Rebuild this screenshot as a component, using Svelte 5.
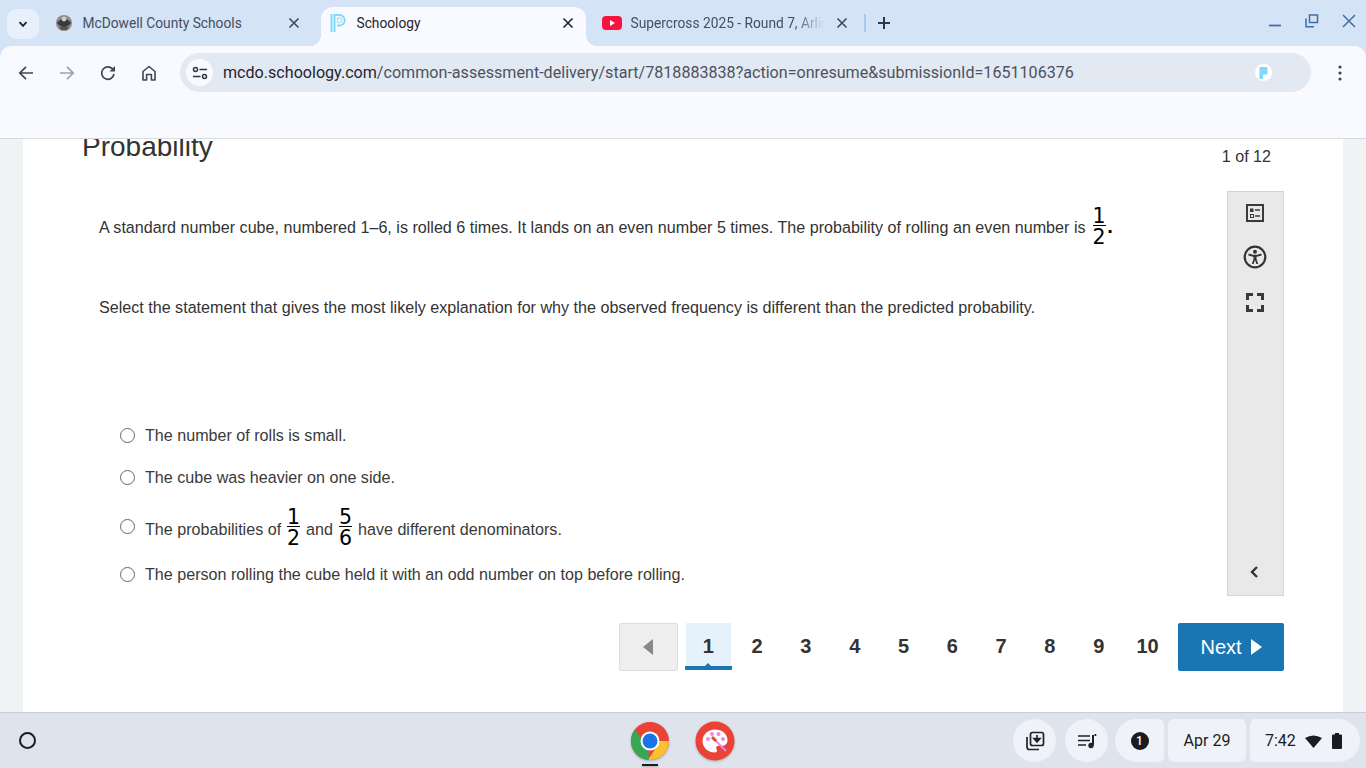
<script>
  const tabs = [
    { id: 'mc', title: 'McDowell County Schools' },
    { id: 'sc', title: 'Schoology', active: true },
    { id: 'yt', title: 'Supercross 2025 - Round 7, Arlington', fade: true }
  ];
  const options = [
    'The number of rolls is small.',
    'The cube was heavier on one side.',
    null,
    'The person rolling the cube held it with an odd number on top before rolling.'
  ];
  const pages = [1, 2, 3, 4, 5, 6, 7, 8, 9, 10];
</script>

{#snippet frac(n, d)}
  <span class="frac"><span class="num">{n}</span><span class="den">{d}</span></span>
{/snippet}

<div class="screen">
  <header class="chrome">
    <div class="tabstrip">
      <button class="tabmenu" aria-label="Search tabs">
        <svg width="12" height="12" viewBox="0 0 12 12"><path d="M2.500 4.200 6 7.800l3.500-3.600" fill="none" stroke="#1f2530" stroke-width="1.900"/></svg>
      </button>
      {#each tabs as tab}
        <div class="tab" class:active={tab.active}>
          <span class="favicon">
            {#if tab.id === 'mc'}
              <svg width="16" height="16" viewBox="0 0 16 16"><circle cx="8" cy="8" r="8" fill="#8b8b8b"/><path d="M1 8q3-4 7-4t7 4q-3 4-7 4T1 8z" fill="#3a3a3a"/><circle cx="8" cy="4" r="2.400" fill="#cfcfcf"/><path d="M3 12h10l-2 3H5z" fill="#565656"/></svg>
            {:else if tab.id === 'sc'}
              <svg width="16" height="18" viewBox="0 0 16 18"><path d="M1.500 0v18M4.500 0v18" stroke="#7fd9fb" stroke-width="2" fill="none"/><path d="M4.500 1h5a5 5 0 0 1 0 10.500H7" stroke="#7fd9fb" stroke-width="1.800" fill="none"/><path d="M7.500 4h2a2.200 2.200 0 0 1 0 4.600H7.500z" stroke="#a8e6fc" stroke-width="1.300" fill="none"/></svg>
            {:else}
              <svg width="20" height="14" viewBox="0 0 20 14"><rect width="20" height="14" rx="4" fill="#f8133c"/><path d="M8 4v6l5-3z" fill="#fff"/></svg>
            {/if}
          </span>
          <span class="tabtitle" class:fade={tab.fade}>{tab.title}</span>
          <svg class="tabx" width="12" height="12" viewBox="0 0 12 12"><path d="M1.500 1.500l9 9m0-9l-9 9" fill="none" stroke={tab.active ? '#20242c' : '#3f4a5c'} stroke-width="1.600"/></svg>
        </div>
      {/each}
      <span class="sep"></span>
      <svg class="plus" width="14" height="14" viewBox="0 0 14 14"><path d="M7 1v12M1 7h12" stroke="#2c3a50" stroke-width="2"/></svg>
      <div class="winctl">
        <svg width="14" height="14" viewBox="0 0 14 14"><path d="M1 11.500h12" stroke="#3f6fa5" stroke-width="1.800"/></svg>
        <svg width="14" height="14" viewBox="0 0 14 14"><path d="M4.500 1h8v7.500h-8zM1 4.500v8.200h8" fill="none" stroke="#3f6fa5" stroke-width="1.500"/></svg>
        <svg width="14" height="14" viewBox="0 0 14 14"><path d="M1 1l12 12m0-12L1 13" fill="none" stroke="#3f6fa5" stroke-width="1.500"/></svg>
      </div>
    </div>
    <div class="toolbar">
      <div class="navicons">
        <svg width="18" height="18" viewBox="0 0 18 18"><path d="M16 9H3m6-6.200L2.800 9 9 15.200" fill="none" stroke="#3c4656" stroke-width="1.700"/></svg>
        <svg width="18" height="18" viewBox="0 0 18 18"><path d="M2 9h13m-6-6.200L15.200 9 9 15.200" fill="none" stroke="#9aa2ae" stroke-width="1.700"/></svg>
        <svg width="18" height="18" viewBox="0 0 18 18"><path d="M15 10a6.200 6.200 0 1 1-1.700-5.300L15 6.500" fill="none" stroke="#3c4656" stroke-width="1.700"/><path d="M16 2v5.500h-5.500z" fill="#3c4656"/></svg>
        <svg width="18" height="18" viewBox="0 0 18 18"><path d="M3 16V7.500L9 2.500l6 5V16h-3.600v-5.500H6.600V16z" fill="none" stroke="#3c4656" stroke-width="1.600" stroke-linejoin="round"/></svg>
      </div>
      <div class="omnibox">
        <span class="siteinfo">
          <svg width="16" height="14" viewBox="0 0 16 14"><circle cx="3.500" cy="3.500" r="2" fill="none" stroke="#2c3542" stroke-width="1.500"/><path d="M7.500 3.500H15M1 10.500h7.500" stroke="#2c3542" stroke-width="1.600"/><circle cx="12.500" cy="10.500" r="2" fill="none" stroke="#2c3542" stroke-width="1.500"/></svg>
        </span>
        <span class="url"><span class="host">mcdo.schoology.com</span>/common-assessment-delivery/start/7818883838?action=onresume&amp;submissionId=1651106376</span>
        <span class="ext"><svg width="9" height="12" viewBox="0 0 9 12"><path d="M.5 0h7a1.500 1.500 0 0 1 1 1.500V6a1.500 1.500 0 0 1-1 1.500H4V12H.5z" fill="#7fd9fb"/></svg></span>
      </div>
      <svg class="kebab" width="4" height="16" viewBox="0 0 4 16"><circle cx="2" cy="2" r="1.600" fill="#3c4656"/><circle cx="2" cy="8" r="1.600" fill="#3c4656"/><circle cx="2" cy="14" r="1.600" fill="#3c4656"/></svg>
    </div>
    <div class="barspace"></div>
  </header>

  <main class="page">
    <section class="card">
      <div class="head">
        <h1>Probability</h1>
        <span class="count">1 of 12</span>
      </div>
      <div class="body">
        <div class="question">
          <p class="stem">A standard number cube, numbered 1–6, is rolled 6 times. It lands on an even number 5 times. The probability of rolling an even number is {@render frac(1, 2)}<span class="dot">.</span></p>
          <p class="prompt">Select the statement that gives the most likely explanation for why the observed frequency is different than the predicted probability.</p>
          <ul class="options">
            {#each options as opt}
              <li class:tall={!opt}>
                <span class="radio"></span>
                {#if opt}
                  <span>{opt}</span>
                {:else}
                  <span>The probabilities of {@render frac(1, 2)} and {@render frac(5, 6)} have different denominators.</span>
                {/if}
              </li>
            {/each}
          </ul>
        </div>
        <aside class="tools">
          <svg width="18" height="18" viewBox="0 0 18 18"><rect x="1" y="1" width="16" height="16" fill="none" stroke="#3a3a3a" stroke-width="2"/><rect x="4" y="4.500" width="3.500" height="3.500" fill="#3a3a3a"/><rect x="4.500" y="10.500" width="3" height="3" fill="none" stroke="#3a3a3a"/><path d="M9 6h5M9 12h5" stroke="#3a3a3a" stroke-width="1.400"/></svg>
          <svg width="24" height="24" viewBox="0 0 24 24"><circle cx="12" cy="12" r="10.300" fill="none" stroke="#333" stroke-width="2.200"/><circle cx="12" cy="6.800" r="2" fill="#333"/><path d="M5.500 9.500l4.800 1.300h3.400l4.800-1.300" fill="none" stroke="#333" stroke-width="1.900"/><path d="M10.500 10.500h3v3.500l1.700 5h-1.800L12 15l-1.400 4H8.800l1.700-5z" fill="#333"/></svg>
          <svg width="18" height="19" viewBox="0 0 18 19"><path d="M0 7V0h7v3H3v4zM11 0h7v7h-3V3h-4zM0 12h3v4h4v3H0zM15 12h3v7h-7v-3h4z" fill="#3a3a3a"/></svg>
          <svg class="collapse" width="11" height="14" viewBox="0 0 11 14"><path d="M8 2 3 7l5 5" fill="none" stroke="#333" stroke-width="2.400"/></svg>
        </aside>
      </div>
      <nav class="pager">
        <button class="prev" aria-label="Previous"><svg width="10" height="16" viewBox="0 0 10 16"><path d="M10 0v16L0 8z" fill="#888"/></svg></button>
        {#each pages as p, i}
          <span class="pg" class:current={i === 0}>{p}</span>
        {/each}
        <button class="next">Next <svg width="11" height="16" viewBox="0 0 11 16"><path d="M0 0v16l11-8z" fill="#fff"/></svg></button>
      </nav>
    </section>
  </main>

  <footer class="shelf">
    <div class="launch"><span class="ring"></span></div>
    <div class="apps">
      <span class="app chromeapp">
        <svg width="40" height="40" viewBox="0 0 40 40">
          <circle cx="20" cy="20" r="19" fill="#ea4335"/>
          <path d="M20 20 3.500 29.500A19 19 0 0 1 5 8.300L13 20z" fill="#34a853"/>
          <path d="M20 20h19a19 19 0 0 1-19 19l-2-.1L27 25z" fill="#fbc02d"/>
          <path d="M3.500 29.500 13 22l5 3 1 14A19 19 0 0 1 3.500 29.500z" fill="#34a853"/>
          <circle cx="20" cy="20" r="9.500" fill="#fff"/>
          <circle cx="20" cy="20" r="7.500" fill="#1a73e8"/>
        </svg>
      </span>
      <span class="app">
        <svg width="40" height="40" viewBox="0 0 40 40">
          <circle cx="20" cy="20" r="19.500" fill="#ea4335"/>
          <path d="M20 8.500c-7 0-12.500 5-12.500 11.500S13 31.500 19.500 31.500c2.500 0 3-1.800 2-3.300-1-1.700.2-3.400 2.300-3.400h3.200c3.300 0 5.500-2.300 5.500-5.300C32.500 13 27 8.500 20 8.500z" fill="#fff"/>
          <circle cx="13" cy="18" r="2" fill="#f08ad8"/><circle cx="17" cy="13" r="2" fill="#f08ad8"/><circle cx="23.500" cy="13" r="2" fill="#f08ad8"/><circle cx="28" cy="18" r="2" fill="#f08ad8"/>
          <path d="M18 17l13 13" stroke="#f08ad8" stroke-width="2"/><path d="M17 16l4 4" stroke="#ea4335" stroke-width="3"/>
        </svg>
      </span>
    </div>
    <div class="tray">
      <span class="pill circle"><svg width="20" height="20" viewBox="0 0 20 20"><rect x="5.500" y="1.500" width="13" height="13" rx="2" fill="none" stroke="#1f2228" stroke-width="1.700"/><path d="M2 6v10a2.500 2.500 0 0 0 2.500 2.500H14" fill="none" stroke="#1f2228" stroke-width="1.700"/><path d="M12 4v4M9 7.500h6L12 11z" stroke="#1f2228" stroke-width="1.600" fill="#1f2228"/></svg></span>
      <span class="pill circle"><svg width="20" height="16" viewBox="0 0 20 16"><path d="M1 3h12M1 7.500h12M1 12h8" stroke="#1f2228" stroke-width="1.700"/><path d="M17.500 2h1.800M16 2v10" stroke="#1f2228" stroke-width="2"/><circle cx="14" cy="12.500" r="2.700" fill="#1f2228"/></svg></span>
      <span class="pill notif"><span class="badge">1</span></span>
      <span class="pill date">Apr 29</span>
      <span class="pill time">7:42
        <svg width="17" height="14" viewBox="0 0 17 14"><path d="M0 4Q8.500-1 17 4L8.500 14z" fill="#1a1c20"/></svg>
        <svg class="batt" width="10" height="16" viewBox="0 0 10 16"><path d="M3 0h4v1.500h2a1 1 0 0 1 1 1V15a1 1 0 0 1-1 1H1a1 1 0 0 1-1-1V2.500a1 1 0 0 1 1-1h2z" fill="#1a1c20"/></svg>
      </span>
    </div>
  </footer>
</div>

<style>
  :global(body) { margin: 0; overflow: hidden; }
  .screen { width: 1366px; height: 768px; display: flex; flex-direction: column; overflow: hidden; font-family: "Liberation Sans", Arial, sans-serif; }

  .chrome { flex: 0 0 139px; background: #d5e3f6; display: flex; flex-direction: column; box-sizing: border-box; }
  .tabstrip { height: 46px; display: flex; align-items: flex-end; font-family: Roboto, sans-serif; font-size: 13.750px; position: relative; }
  .tabmenu { width: 32px; height: 30px; margin: 0 0 7px 7px; padding: 0; border: 0; border-radius: 10px; background: #e8f0fc; display: flex; align-items: center; justify-content: center; flex: none; }
  .tab { width: 265px; height: 39px; margin-left: 9px; box-sizing: border-box; padding: 0 12px 7px 9px; display: flex; align-items: center; color: #44505f; position: relative; border-radius: 12px 12px 0 0; flex: none; }
  .tabmenu + .tab { margin-left: 8px; }
  .tab.active { background: #f8faff; color: #1f2530; }
  .tab.active::before, .tab.active::after { content: ""; position: absolute; bottom: 0; width: 12px; height: 12px; }
  .tab.active::before { left: -12px; background: radial-gradient(circle at 0 0, transparent 12px, #f8faff 12.500px); }
  .tab.active::after { right: -12px; background: radial-gradient(circle at 100% 0, transparent 12px, #f8faff 12.500px); }
  .favicon { width: 20px; display: flex; justify-content: center; flex: none; margin-right: 8.500px; margin-left: -2px; }
  .tabtitle { flex: 1; min-width: 0; white-space: nowrap; overflow: hidden; }
  .tabtitle.fade { -webkit-mask-image: linear-gradient(to right, #000 82%, transparent 97%); mask-image: linear-gradient(to right, #000 82%, transparent 97%); }
  .tabx { flex: none; margin-left: 6px; }
  .sep { width: 2px; height: 18px; background: #a9c9f2; margin: 0 0 14px 4px; flex: none; }
  .plus { margin: 0 0 16px 11px; flex: none; }
  .winctl { margin-left: auto; display: flex; gap: 23px; align-self: center; padding-right: 10px; margin-top: -5px; }

  .toolbar { height: 54px; background: #f8faff; border-radius: 12px 12px 0 0; display: flex; align-items: center; box-sizing: border-box; padding: 0 0 1px 17px; }
  .navicons { display: flex; gap: 23px; width: 163px; flex: none; }
  .omnibox { width: 1131px; height: 39px; border-radius: 20px; background: #e3e9f2; display: flex; align-items: center; box-sizing: border-box; padding-left: 6px; flex: none; }
  .siteinfo { width: 27px; height: 27px; background: #f8faff; border-radius: 50%; display: flex; align-items: center; justify-content: center; margin-right: 10px; flex: none; }
  .url { font-family: Roboto, sans-serif; font-size: 16.100px; color: #4a5360; white-space: nowrap; flex: 1; }
  .host { color: #1f2530; }
  .ext { width: 17px; height: 17px; border-radius: 50%; background: #fff; display: flex; align-items: center; justify-content: center; margin-right: 39px; flex: none; }
  .kebab { margin-left: 27px; flex: none; }
  .barspace { height: 39px; background: #f8faff; border-bottom: 1px solid #d8dade; box-sizing: border-box; }

  .page { flex: 1; min-height: 0; background: #f0f3f4; padding: 0 23px; overflow: hidden; }
  .card { background: #fff; height: 100%; box-sizing: border-box; padding: 0 59px; color: #333; }
  .head { height: 52px; display: flex; justify-content: space-between; align-items: flex-start; }
  h1 { margin: -8px 0 0; font-size: 28px; font-weight: 400; line-height: 32px; color: #333; }
  .count { font-size: 16.100px; line-height: 20px; margin: 7px 13px 0 0; }
  .body { display: grid; grid-template-columns: 1fr 57px; grid-template-rows: 405px; }
  .question { padding-left: 17px; font-size: 16.120px; }
  p { margin: 0; }
  .stem { margin-top: 17px; height: 38px; white-space: nowrap; }
  .prompt { margin-top: 49px; line-height: 24px; }
  .frac { display: inline-flex; flex-direction: column; align-items: stretch; text-align: center; vertical-align: 11px; font-family: "DejaVu Sans", sans-serif; font-size: 20.500px; line-height: 17px; color: #000; margin: 0 1.500px; }
  .stem .frac { vertical-align: 10px; margin-left: 2.500px; }
  .num { border-bottom: 1.500px solid #000; }
  .den { padding-top: 3px; }
  .dot { font-family: "DejaVu Sans", sans-serif; font-size: 16px; font-weight: 700; color: #000; }
  .options { list-style: none; margin: 104px 0 0; padding: 0 0 0 21px; }
  .options li { display: flex; align-items: center; gap: 10px; height: 24px; margin-bottom: 18px; color: #3a3a3a; }
  .options li:nth-child(2) { margin-bottom: 19px; }
  .options li.tall { height: 40px; margin-bottom: 14px; }
  .options li:last-child { margin-bottom: 0; }
  .tall .radio { margin-bottom: 4px; }
  .radio { width: 13px; height: 13px; border: 1.500px solid #666; border-radius: 50%; background: #fff; flex: none; }
  .tools { background: #e9e9e9; border: 1px solid #d4d4d4; box-sizing: border-box; display: flex; flex-direction: column; align-items: center; padding: 12px 2px 0 0; }
  .tools svg:nth-child(2) { margin-top: 23px; }
  .tools svg:nth-child(3) { margin-top: 24px; }
  .collapse { margin-top: auto; margin-bottom: 16px; }

  .pager { display: flex; justify-content: flex-end; align-items: flex-start; margin-top: 27px; }
  .prev { width: 59px; height: 48px; background: #eee; border: 1px solid #ddd; border-radius: 2px; padding: 0; margin-right: 8px; display: flex; align-items: center; justify-content: center; }
  .pg { width: 45px; height: 43px; margin-right: 3.800px; font-size: 20px; font-weight: 700; line-height: 47px; text-align: center; color: #333; position: relative; }
  .pg.current { background: #e5f2fb; }
  .pg.current::after { content: ""; position: absolute; left: -1px; right: -1px; top: 43px; height: 4px; background: #1a76b3; border-radius: 0 0 1px 1px; }
  .pg.current::before { content: ""; position: absolute; left: 50%; top: 40px; margin-left: -3px; border: 3px solid transparent; border-top: 0; border-bottom-color: #1a76b3; }
  .pg:nth-last-child(2) { margin-right: 8px; }
  .next { width: 106px; height: 48px; background: #1a76b3; border: 0; border-radius: 2px; color: #fff; font-family: inherit; font-size: 20px; padding: 0; display: flex; align-items: center; justify-content: center; gap: 9px; flex: none; }

  .shelf { flex: 0 0 56px; box-sizing: border-box; background: #dfe3ec; border-top: 1px solid #c9cdd8; display: grid; grid-template-columns: 1fr auto 1fr; align-items: center; font-family: Roboto, sans-serif; }
  .launch { padding-left: 19px; display: flex; }
  .ring { width: 13px; height: 13px; border: 2.500px solid #1a1c20; border-radius: 50%; }
  .apps { display: flex; gap: 25px; align-items: center; margin-right: 1px; }
  .app { display: flex; position: relative; filter: drop-shadow(0 1px 1px rgba(0,0,0,.25)); }
  .chromeapp::after { content: ""; position: absolute; left: 12px; bottom: -5px; width: 16px; height: 2px; background: #1a1c20; }
  .tray { display: flex; justify-content: flex-end; gap: 4px; padding-right: 6px; }
  .pill { height: 43px; background: #f0f2f9; display: flex; align-items: center; justify-content: center; font-size: 16px; color: #1a1c20; box-sizing: border-box; flex: none; }
  .circle { width: 43px; border-radius: 50%; margin-right: 5px; }
  .circle + .notif { margin-left: -2px; }
  .notif { width: 49px; border-radius: 22px 6px 6px 22px; }
  .badge { width: 18px; height: 18px; border-radius: 50%; background: #1a1c20; color: #fff; font-size: 12px; font-weight: 500; display: flex; align-items: center; justify-content: center; }
  .date { width: 78px; border-radius: 6px; }
  .time { width: 110px; border-radius: 6px 22px 22px 6px; gap: 9px; justify-content: flex-start; padding-left: 15px; }
  .batt { margin-left: 1px; }
</style>
